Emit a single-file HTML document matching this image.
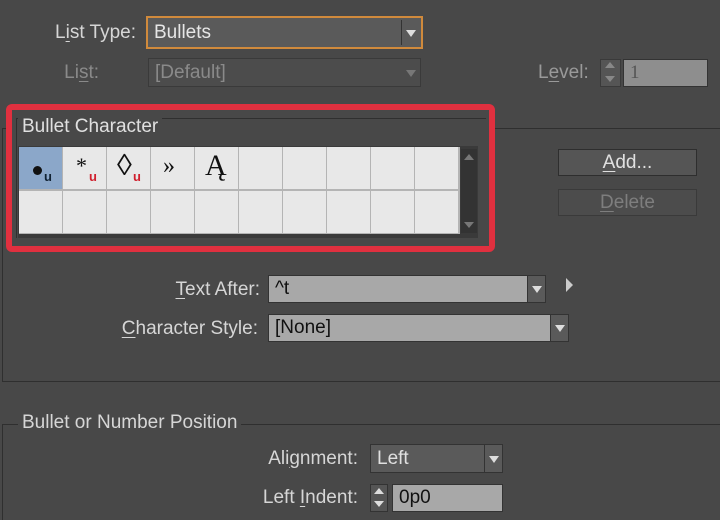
<!DOCTYPE html>
<html><head><meta charset="utf-8"><style>
html,body{margin:0;width:720px;height:520px;overflow:hidden}
body{background:#484848;position:relative;font-family:"Liberation Sans Narrow","Liberation Sans",sans-serif;color:#d6d6d6;font-size:19px}
.a{position:absolute}
.lbl{position:absolute;text-align:right;white-space:nowrap}
.u{text-decoration:underline;text-underline-offset:3px}
.fld{position:absolute;box-sizing:border-box;border:1px solid #333;background:#a8a8a8;color:#111;padding-left:6px;white-space:nowrap}
.arr{position:absolute;top:0;right:0;width:17px;height:100%;background:#5a5a5a;border-left:1px solid #333}
.arr:after{content:"";position:absolute;left:4px;top:50%;margin-top:-3px;border-left:5px solid transparent;border-right:5px solid transparent;border-top:7px solid #ddd}
.cell{position:absolute;width:43px;height:42px;background:#e8e8e8;font-family:"Liberation Serif",serif;color:#111}
.btn{position:absolute;box-sizing:border-box;border:1px solid #2e2e2e;background:#555;text-align:center}
</style></head><body>
<div class="lbl" style="right:584px;top:22px">L<span class="u">i</span>st Type:</div>
<div class="fld" style="left:146px;top:16px;width:277px;height:33px;border:2px solid #d08a3c;background:#5a5a5a;color:#e6e6e6;line-height:29px">Bullets<div class="arr" style="right:2px;top:2px;height:25px;width:17px"></div></div>

<div class="lbl" style="right:621px;top:62px;color:#8a8a8a">Li<span class="u">s</span>t:</div>
<div class="fld" style="left:148px;top:58px;width:273px;height:29px;background:#4c4c4c;border-color:#3a3a3a;color:#8a8a8a;line-height:27px">[Default]<div class="a" style="right:4px;top:11px;border-left:5px solid transparent;border-right:5px solid transparent;border-top:7px solid #777"></div></div>
<div class="lbl" style="left:538px;top:62px;color:#9a9a9a">L<span class="u">e</span>vel:</div>
<div class="a" style="left:600px;top:59px;width:21px;height:28px;background:#555;border:1px solid #3a3a3a;box-sizing:border-box"></div>
<div class="a" style="left:605px;top:62px;border-left:5px solid transparent;border-right:5px solid transparent;border-bottom:6px solid #888"></div>
<div class="a" style="left:605px;top:76px;border-left:5px solid transparent;border-right:5px solid transparent;border-top:6px solid #888"></div>
<div class="fld" style="left:623px;top:59px;width:85px;height:28px;background:#8e8e8e;color:#555;line-height:26px;font-family:'Liberation Serif',serif">1</div>

<!-- group 1 -->
<div class="a" style="left:2px;top:128px;width:720px;height:254px;border:1px solid #2f2f2f;border-right:none;box-sizing:border-box"></div>
<div class="a" style="left:6px;top:104px;width:489px;height:148px;border:6px solid #e0303f;border-radius:6px;box-sizing:border-box;background:#484848"></div>
<div class="a" style="left:16px;top:118px;width:470px;height:1px;background:#2f2f2f"></div>
<div class="a" style="left:16px;top:118px;width:1px;height:120px;background:#2f2f2f"></div>
<div class="a" style="left:18px;top:116px;background:#484848;padding:0 4px;color:#e0e0e0">Bullet Character</div>
<div class="a" style="left:18px;top:146px;width:460px;height:92px;background:#3a3a3a"></div>
<div class="a" style="left:19px;top:147px;width:441px;height:87px;background:#b4b4b4"></div>
<div id="grid"></div>
<div class="a" style="left:461px;top:149px;width:16px;height:84px;background:#333"></div>
<div class="a" style="left:464px;top:154px;border-left:5px solid transparent;border-right:5px solid transparent;border-bottom:6px solid #777"></div>
<div class="a" style="left:464px;top:222px;border-left:5px solid transparent;border-right:5px solid transparent;border-top:6px solid #777"></div>

<div class="btn" style="left:558px;top:149px;width:139px;height:27px;line-height:25px;color:#e0e0e0"><span class="u">A</span>dd...</div>
<div class="btn" style="left:558px;top:189px;width:139px;height:27px;line-height:25px;background:#4c4c4c;color:#7e7e7e;border-color:#3a3a3a"><span class="u">D</span>elete</div>

<div class="lbl" style="right:460px;top:279px"><span class="u">T</span>ext After:</div>
<div class="fld" style="left:268px;top:275px;width:278px;height:28px;line-height:26px">^t<div class="arr"></div></div>
<div class="a" style="left:566px;top:278px;border-top:7px solid transparent;border-bottom:7px solid transparent;border-left:7px solid #ccc"></div>
<div class="lbl" style="right:462px;top:318px"><span class="u">C</span>haracter Style:</div>
<div class="fld" style="left:268px;top:314px;width:301px;height:28px;line-height:26px">[None]<div class="arr"></div></div>

<!-- group 2 -->
<div class="a" style="left:2px;top:424px;width:718px;height:96px;border-top:1px solid #2f2f2f;border-left:1px solid #2f2f2f"></div>
<div class="a" style="left:18px;top:412px;background:#484848;padding:0 4px">Bullet or Number Position</div>
<div class="lbl" style="right:362px;top:448px">Ali<span class="u">g</span>nment:</div>
<div class="fld" style="left:370px;top:444px;width:133px;height:29px;background:#5a5a5a;color:#e0e0e0;line-height:27px">Left<div class="arr"></div></div>
<div class="lbl" style="right:362px;top:487px">Left <span class="u">I</span>ndent:</div>
<div class="a" style="left:370px;top:484px;width:18px;height:28px;background:#555;border:1px solid #333;box-sizing:border-box"></div>
<div class="a" style="left:374px;top:488px;border-left:5px solid transparent;border-right:5px solid transparent;border-bottom:6px solid #ddd"></div>
<div class="a" style="left:374px;top:501px;border-left:5px solid transparent;border-right:5px solid transparent;border-top:6px solid #ddd"></div>
<div class="fld" style="left:392px;top:484px;width:111px;height:28px;line-height:26px">0p0</div>

<script>
var g='';var syms=['','*','◊','»','Ą'];
for(var r=0;r<2;r++)for(var c=0;c<10;c++){
var x=19+c*44,y=147+r*44;var bg=(r==0&&c==0)?'#8ba7c9':'#e8e8e8';var inner='';
if(r==0){if(c==0)inner='<div class="a" style="left:14px;top:19px;width:9px;height:9px;border-radius:50%;background:#111"></div><div class="a" style="left:25px;top:22px;font:bold 13px Liberation Sans,sans-serif;color:#123">u</div>';
else if(c<5){var fs=c==2?30:c==4?30:c==1?22:24;inner='<div class="a" style="left:'+(c==1?13:c==3?12:c==2?10:10)+'px;top:'+(c==1?6:c==3?6:2)+'px;font-size:'+fs+'px">'+syms[c]+'</div>';
if(c<3)inner+='<div class="a" style="left:26px;top:22px;font:bold 13px Liberation Sans,sans-serif;color:#d0202e">u</div>';}}
g+='<div class="cell" style="left:'+x+'px;top:'+y+'px;background:'+bg+'">'+inner+'</div>';}
document.getElementById('grid').innerHTML=g;
</script>
</body></html>
